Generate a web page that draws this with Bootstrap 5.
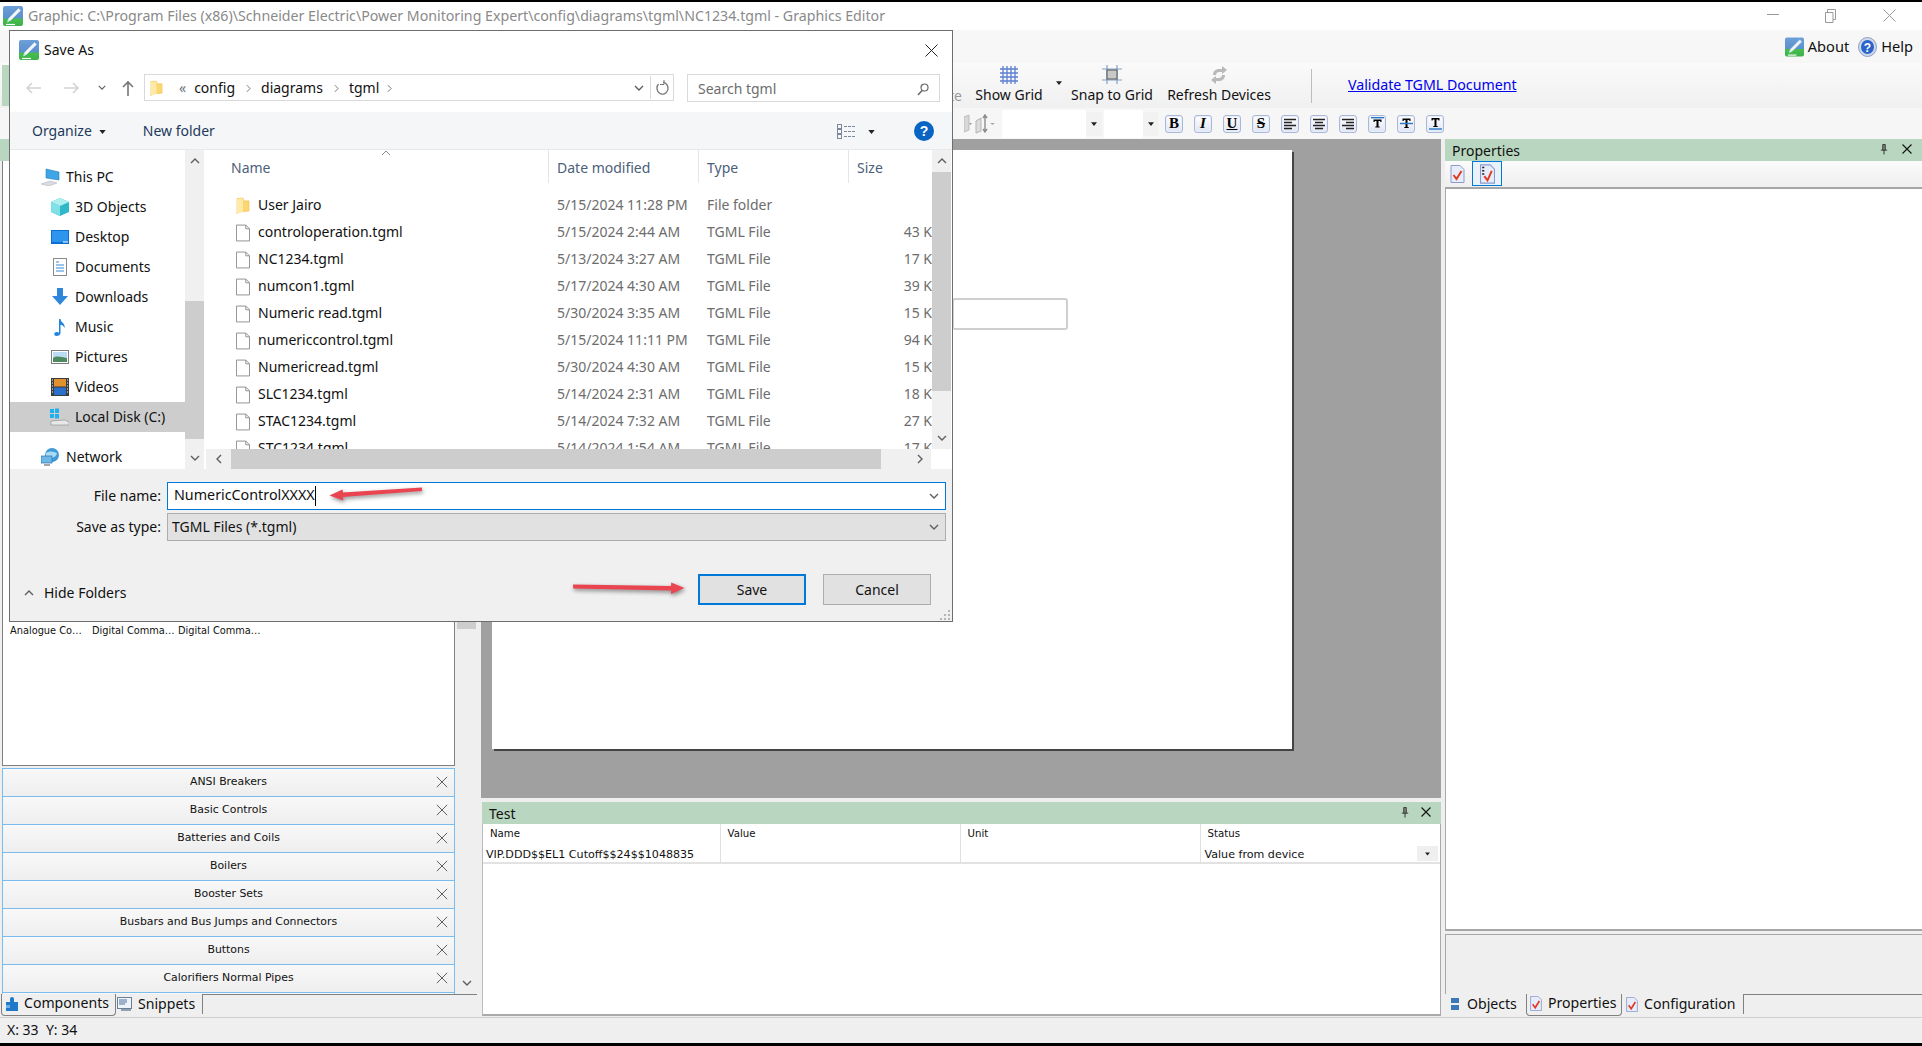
<!DOCTYPE html>
<html lang="en">
<head>
<meta charset="utf-8">
<title>Graphics Editor</title>
<link href="https://cdn.jsdelivr.net/npm/bootstrap@5.3.0/dist/css/bootstrap.min.css" rel="stylesheet">
<style>
html,body{height:100%;overflow:hidden;background:#000;}
body{font-family:"Noto Sans","Open Sans",sans-serif;font-size:14px;color:#111;line-height:1.2;}
svg{display:block;flex:none;}
.app-win{margin-top:2px;height:1041px;width:1922px;background:#efefef;position:relative;}
.title-bar{height:28px;background:#fff;padding-left:3px;}
.title-text{font-size:14.2px;color:#8a8a8a;margin-left:5px;white-space:nowrap;}
.win-btn{width:58px;display:flex;justify-content:center;}
.menu-row{height:33px;background:#f7f7f7;padding-right:9px;font-size:14.6px;}
.gap-about{margin-right:9px;}
.ribbon-row{height:45px;background:linear-gradient(#fafafa,#f0f0f0);}
.green-stub{width:7px;height:41px;margin-left:2px;background:#b9d7c0;}
.rib-spacer{width:953px;height:45px;text-align:right;color:#999;padding-top:25px;}
.rib-btn{display:flex;flex-direction:column;align-items:center;height:45px;padding-top:3px;white-space:nowrap;}
.rib-btn span{margin-top:3px;}
.rib-grid{width:88px;margin-left:3px;}
.rib-snap{width:94px;padding-top:2px;}
.rib-refresh{width:120px;}
.rib-drop{width:12px;padding-top:18px;display:flex;justify-content:center;align-self:flex-start;}
.rib-sep{width:1px;height:34px;background:#bdbdbd;margin:0 36px 0 32px;}
.rib-link{color:#0000ee;text-decoration:underline;font-size:14.2px;margin-top:-1px;}
.format-row{height:31px;background:#f6f6f6;}
.fmt-icons{width:1002px;display:flex;justify-content:flex-end;padding-right:6px;}
.combo-white{height:28px;background:#fff;}
.cw-font{width:84px;}
.cw-size{width:39px;margin-left:2px;}
.combo-drop{height:24px;background:#f2f2f2;display:flex;align-items:center;justify-content:center;}
.cd-font{width:16px;}
.cd-size{width:15px;}
.fmt-group{display:flex;gap:11px;margin-left:7px;}
.fmt-btn{width:18px;height:18px;border:1px solid #a9b8da;border-radius:3px;background:linear-gradient(#fff,#dfe5f3);display:flex;align-items:center;justify-content:center;box-shadow:inset 0 0 0 1px #e9eef8;font-family:"Liberation Serif",serif;font-weight:700;font-size:15px;line-height:1;color:#000;}
.fmt-i{font-style:italic;}
.fmt-u{text-decoration:underline;}
.fmt-s{text-decoration:line-through;}
.fmt-t{font-size:13px;}
.main-row{height:878px;}
.left-col{width:481px;background:#efefef;}
.center-col{width:960px;}
.right-col{width:481px;padding-left:4px;}
.dock-head{height:22px;background:#b9d7c0;padding:2px 10px 0 7px;display:flex;align-items:center;font-size:14px;}
.dock-tools{margin-left:auto;display:flex;align-items:center;gap:12px;margin-top:-4px;}
.dock-tools-wide{gap:14px;}
.left-body{height:833px;}
.left-stack{width:453px;margin-left:2px;}
.tile-pane{height:605px;background:#fff;border:1px solid #808080;border-top:0;padding-top:464px;}
.tile-labels{padding-left:7px;font-family:"DejaVu Sans",sans-serif;font-size:9.8px;display:flex;}
.tile-labels span{white-space:nowrap;}
.tl-a{width:82px;}
.tl-b{width:86px;}
.cat-list{height:226px;overflow:hidden;margin-top:2px;border-radius:0;}
.cat-item{display:grid;flex:none;grid-template-columns:24px 1fr 24px;align-items:center;height:28px;padding:0 0 2px;background:linear-gradient(#f8f8f8,#eeeeee);border:1px solid #7cbcec;border-bottom:0;border-radius:0!important;font-family:"DejaVu Sans",sans-serif;font-size:10.9px;color:#111;text-align:center;}
.cat-item+.cat-item{border-top-width:1px;margin-top:0;}
.cat-item svg{justify-self:center;}
.vscroll-l{width:19px;margin-left:2px;background:#efefef;position:relative;}
.vthumb-l{height:468px;background:#cdcdcd;}
.vchev-l{margin-top:auto;padding-bottom:8px;display:flex;justify-content:center;}
.tab-strip{height:23px;font-size:14.1px;}
.tab-on{border:1px solid #808080;border-top:0;border-radius:0 0 4px 4px;height:22px;}
.tab-item{display:flex;align-items:center;gap:6px;white-space:nowrap;padding-bottom:3px;}
.tab-sep{width:1px;height:20px;background:#808080;}
.tab-line{flex:1;border-top:1px solid #808080;align-self:flex-start;}
.tab-comp{margin-left:1px;padding-left:4px;width:115px;}
.tab-snip{padding-left:1px;width:86px;}
.tab-obj{padding-left:6px;width:81px;gap:8px;}
.tab-prop{padding-left:3px;width:96px;}
.tab-conf{padding-left:4px;width:121px;}
.canvas-wrap{height:659px;background:#a0a0a0;padding:11px 0 0 11px;}
.page-sheet{width:800px;height:599px;background:#fff;box-shadow:2px 2px 0 #444;position:relative;}
.sheet-input{position:absolute;left:460px;top:148px;width:116px;height:32px;border:2px solid #cfcfcf;border-radius:3px;}
.test-panel{margin-top:4px;margin-left:1px;height:215px;}
.test-body{height:192px;background:#fff;border-left:1px solid #bbb;border-right:1px solid #aaa;border-bottom:2px solid #aaa;}
.tbl-test{table-layout:fixed;width:100%;margin:0;font-family:"DejaVu Sans",sans-serif;font-size:10.2px;}
.tc-first{width:237px;}
.tbl-test>tbody>tr>td{padding:0 0 0 7px;border:0;border-left:1px solid #e0e0e0;height:21px;vertical-align:middle;background:transparent;color:#111;position:relative;white-space:nowrap;}
.tbl-test>tbody>tr:last-child>td{height:18px;border-bottom:2px solid #e2e2e2;font-size:11.1px;padding-top:2px;}
.tbl-test>tbody>tr>td:first-child{border-left:0;}
.tbl-test>tbody>tr:last-child>td:first-child{padding-left:3px;}
.tbl-test>tbody>tr:last-child>td:last-child{padding-left:4px;}
.cell-drop{position:absolute;right:2px;top:1px;width:21px;height:15px;background:#efefef;display:flex;align-items:center;justify-content:center;}
.prop-tools{height:28px;background:linear-gradient(#fbfbfb,#efefef);border-bottom:2px solid #a6a6a6;padding-left:5px;display:flex;align-items:center;gap:7px;}
.prop-sel{width:30px;height:25px;border:1px solid #0078d7;background:#e9f1fb;display:flex;align-items:center;justify-content:center;}
.prop-body{height:743px;background:#fff;border-left:1px solid #aaa;border-bottom:2px solid #a6a6a6;}
.prop-low{height:60px;margin-top:3px;background:#efefef;border:1px solid #a6a6a6;border-right:0;border-bottom:0;}
.status-bar{height:26px;background:#efefef;border-top:1px solid #cfcfcf;padding-left:7px;font-size:14px;display:flex;align-items:center;}
.dlg{position:absolute;left:9px;top:28px;width:944px;height:592px;background:#fff;border:1px solid #6e6e6e;display:flex;flex-direction:column;font-family:"Noto Sans","Open Sans",sans-serif;font-size:14px;}
.dlg-title{height:38px;padding-left:9px;flex:none;}
.dlg-title-ic{margin-right:5px;}
.dlg-close{margin-left:auto;margin-right:14px;}
.dlg-nav{height:43px;flex:none;padding-top:5px;align-items:flex-start;}
.nbox{display:flex;justify-content:center;align-items:center;height:27px;}
.nb-back{width:46px;}
.nb-fwd{width:32px;}
.nb-down{width:28px;}
.nb-up{width:24px;}
.addr-box{width:530px;height:27px;margin-left:4px;border:1px solid #d9d9d9;padding:2px 0 0 5px;}
.addr-box span{white-space:nowrap;}
.addr-sep{margin:0 10px 0 11px;}
.addr-end{margin-left:auto;display:flex;align-items:center;height:100%;margin-top:-2px;}
.addr-div{width:1px;height:100%;background:#d9d9d9;margin:0 4px 0 6px;}
.addr-ref{margin-right:4px;}
.search-box{width:253px;height:28px;margin-left:13px;border:1px solid #d9d9d9;color:#6d6d6d;padding:3px 10px 0;}
.dlg-tools{height:38px;flex:none;background:#f5f6f7;border-bottom:1px solid #e8e8e8;padding:2px 0 0 22px;color:#1c3a5e;}
.org-tri{margin:0 37px 0 7px;}
.view-ic{margin-left:auto;}
.view-tri{margin:0 38px 0 13px;}
.help-ic{margin-right:17px;margin-top:-2px;}
.dlg-body{height:319px;flex:none;}
.nav-pane{width:175px;padding-top:12px;overflow:hidden;height:319px;}
.nav-it{height:30px;display:flex;align-items:center;gap:6px;padding-left:41px;white-space:nowrap;}
.nav-top{padding-left:31px;}
.nav-sel{background:#cdcdcd;padding-left:40px;}
.nav-net{margin-top:10px;}
.scroll-y{width:19px;background:#f0f0f0;position:relative;}
.nav-thumb{position:absolute;left:0;right:0;top:151px;height:138px;background:#cdcdcd;}
.chev-slot{height:22px;display:flex;align-items:center;justify-content:center;position:relative;}
.chev-end{position:absolute;left:0;right:0;bottom:0;}
.list-area{width:746px;margin-left:2px;}
.list-top{height:299px;}
.file-pane{width:726px;overflow:hidden;height:299px;}
.file-head{height:42px;display:flex;color:#4c607a;position:relative;}
.fh{height:33px;display:flex;align-items:center;padding:3px 0 0 8px;border-right:1px solid #e5e5e5;}
.fc-name{width:343px;}
.fc-date{width:150px;}
.fc-size{width:83px;}
.fh.fc-name{padding-left:25px;}
.fh.fc-size{border-right:0;}
.sort-mark{position:absolute;left:175px;top:0;}
.file-row{height:27px;display:flex;align-items:center;color:#6d6d6d;white-space:nowrap;}
.fr-name{display:flex;align-items:center;gap:8px;padding-left:30px;color:#111;}
.fr-date,.fr-type{padding-left:8px;}
.fr-size{text-align:right;}
.list-v{width:19px;background:#f0f0f0;height:299px;position:relative;}
.list-vthumb{position:absolute;left:0;right:0;top:22px;height:219px;background:#cdcdcd;}
.list-h{height:20px;}
.hs-track{width:725px;height:20px;background:#f0f0f0;display:flex;}
.hs-left{width:25px;display:flex;align-items:center;justify-content:center;}
.hs-thumb{width:650px;background:#cdcdcd;}
.hs-right{width:50px;display:flex;align-items:center;justify-content:center;padding-left:28px;}
.dlg-foot{flex:1;background:#f0f0f0;padding-top:13px;position:relative;}
.ff-row{display:flex;align-items:center;height:28px;}
.ff-row-2{margin-top:3px;}
.ff-label{width:151px;text-align:right;margin-right:6px;}
.ff-in{width:779px;height:28px;display:flex;align-items:center;justify-content:space-between;padding:0 6px;}
.ff-active{background:#fff;border:1px solid #0078d7;font-size:14.3px;}
.ff-type{background:#e1e1e1;border:1px solid #adadad;padding-left:4px;}
.caret-bar{display:inline-block;width:1px;height:20px;background:#000;vertical-align:middle;}
.foot-btns{margin-top:33px;height:31px;padding-left:14px;padding-right:21px;}
.hide-f{margin-top:11px;gap:10px;}
.dlg-btn{width:108px;height:31px;border-radius:0;background:#e1e1e1;border:1px solid #adadad;color:#111;font-size:14px;padding:0;}
.dlg-btn-main{border:2px solid #0078d7;margin-right:17px;}
.foot-push{margin-left:auto;}
.grip{position:absolute;right:2px;bottom:1px;}
.anno{position:absolute;left:0;top:0;pointer-events:none;filter:drop-shadow(1px 2px 2px rgba(0,0,0,.45));}
.defs-host{position:absolute;}
</style>
</head>
<body>
<svg width="0" height="0" class="defs-host">
  <defs>
    <linearGradient id="gApp" x1="0" y1="0" x2="0" y2="1"><stop offset="0" stop-color="#6d9fd8"/><stop offset=".62" stop-color="#5b8fcc"/><stop offset=".63" stop-color="#45bf4e"/><stop offset="1" stop-color="#3fb04a"/></linearGradient>
    <symbol id="i-app" viewBox="0 0 20 20"><rect width="20" height="20" rx="2" fill="url(#gApp)"/><path d="M15.500 2.500l2 2L8 14l-3.500 2 1.400-3.800z" fill="#f4f8fb" stroke="#cfe0ef" stroke-width=".7"/><path d="M3 18.500h9" stroke="#fff" stroke-width="1.200"/></symbol>
    <symbol id="i-chevd" viewBox="0 0 10 6"><path d="M1 1l4 4 4-4" fill="none" stroke="#5f5f5f" stroke-width="1.400"/></symbol>
    <symbol id="i-chevu" viewBox="0 0 10 6"><path d="M1 5l4-4 4 4" fill="none" stroke="#5f5f5f" stroke-width="1.400"/></symbol>
    <symbol id="i-chevr" viewBox="0 0 6 10"><path d="M1 1l4 4-4 4" fill="none" stroke="#6f6f6f" stroke-width="1.100"/></symbol>
    <symbol id="i-chevl" viewBox="0 0 6 10"><path d="M5 1L1 5l4 4" fill="none" stroke="#5f5f5f" stroke-width="1.400"/></symbol>
    <symbol id="i-chevr2" viewBox="0 0 6 10"><path d="M1 1l4 4-4 4" fill="none" stroke="#5f5f5f" stroke-width="1.400"/></symbol>
    <symbol id="i-folder" viewBox="0 0 14 18"><path d="M1 1.500l6-.5 1 3 5-.2V14l-11 1-1 2z" fill="#fbd671" stroke="#f0c14f" stroke-width=".6"/><path d="M1 16.500V2l6-.7V15z" fill="#ffe9a6"/></symbol>
    <symbol id="i-file" viewBox="0 0 15 18"><path d="M.5.500h10l4 4v13H.5z" fill="#fff" stroke="#8c8c8c"/><path d="M10.500.5v4h4" fill="none" stroke="#8c8c8c"/></symbol>
    <symbol id="i-tri" viewBox="0 0 8 5"><path d="M0 0h8L4 5z" fill="#222"/></symbol>
    <symbol id="i-x" viewBox="0 0 14 14"><path d="M1 1l12 12M13 1L1 13" stroke="#555" stroke-width="1.100" fill="none"/></symbol>
    <symbol id="i-pin" viewBox="0 0 10 14"><path d="M3 1h4v7h2v1H1V8h2zM4.500 9h1v5h-1z" fill="#111"/><path d="M5 2v6" stroke="#fff"/></symbol>
    <symbol id="i-check" viewBox="0 0 14 18"><path d="M.5.500h9l4 4v13H.5z" fill="#e6ecf9" stroke="#8c9ad0"/><path d="M3 10l3 4 5-8" fill="none" stroke="#e23a1f" stroke-width="2"/></symbol>
  </defs>
</svg>

<div class="app-win d-flex flex-column">
  <header class="title-bar d-flex align-items-center">
    <svg width="20" height="20"><use href="#i-app"/></svg>
    <span class="title-text">Graphic: C:\Program Files (x86)\Schneider Electric\Power Monitoring Expert\config\diagrams\tgml\NC1234.tgml - Graphics Editor</span>
    <div class="ms-auto d-flex pe-1">
      <div class="win-btn"><svg width="12" height="10"><path d="M0 5.500h12" stroke="#999"/></svg></div>
      <div class="win-btn"><svg width="12" height="14"><path d="M2.500 3.500V.5h8v10H8M.5 3.500h7.500v10H.5z" fill="none" stroke="#999"/></svg></div>
      <div class="win-btn"><svg width="13" height="13"><path d="M.5.500l12 12M12.500.5l-12 12" stroke="#999"/></svg></div>
    </div>
  </header>

  <div class="menu-row d-flex align-items-center justify-content-end">
    <svg width="19" height="20" class="me-1"><use href="#i-app"/></svg>
    <span class="gap-about">About</span>
    <svg width="19" height="20" class="me-1" viewBox="0 0 19 20"><ellipse cx="9.500" cy="10" rx="9" ry="9.500" fill="#cfd8ec" stroke="#8ea0c4"/><ellipse cx="9.500" cy="10" rx="6.500" ry="7" fill="#2a64c8"/><text x="9.500" y="14.500" text-anchor="middle" fill="#fff" font-size="12" font-weight="700" font-family="Liberation Sans">?</text></svg>
    <span>Help</span>
  </div>

  <div class="ribbon-row d-flex align-items-center">
    <div class="green-stub"></div>
    <div class="rib-spacer">Rotate</div>
    <div class="rib-btn rib-grid">
      <svg width="18" height="18" viewBox="0 0 18 18"><g stroke="#5b7fd0" stroke-width="1.300" fill="none"><path d="M3 0v18M7 0v18M11 0v18M15 0v18M0 3h18M0 7h18M0 11h18M0 15h18"/></g></svg>
      <span>Show Grid</span>
    </div>
    <div class="rib-drop"><svg width="6" height="4"><use href="#i-tri"/></svg></div>
    <div class="rib-btn rib-snap">
      <svg width="20" height="19" viewBox="0 0 20 19"><path d="M5 0v19M15 0v19M0 4h20M0 15h20" stroke="#7fa2c9" stroke-width="1.200"/><rect x="5" y="5" width="10" height="9" fill="#c9c9c9" stroke="#555"/></svg>
      <span>Snap to Grid</span>
    </div>
    <div class="rib-btn rib-refresh">
      <svg width="16" height="18" viewBox="0 0 16 18"><path d="M2 9c0-4 3-6 6-6h3V0l5 4-5 4V6H8C6 6 5 7.500 5 9zM14 9c0 4-3 6-6 6H5v3l-5-4 5-4v2h3c2 0 3-1.500 3-3z" fill="#b9b9b9"/></svg>
      <span>Refresh Devices</span>
    </div>
    <div class="rib-sep"></div>
    <a href="#" class="rib-link">Validate TGML Document</a>
  </div>

  <div class="format-row d-flex align-items-center">
    <div class="fmt-icons">
      <svg width="32" height="20" viewBox="0 0 32 20"><path d="M0 3l5-2v15l-5 2z" fill="#d8d8d8" stroke="#bbb"/><path d="M5 9l3 0-1.500 2z" fill="#999"/><path d="M12 7l5-3v13l-5 2z" fill="#dcdcdc" stroke="#b5b5b5"/><path d="M21 1v17M19 4l2-3 2 3M19 15l2 3 2-3" stroke="#8d8d8d" fill="none" stroke-width="1.400"/><path d="M26 9h5l-2.500 2z" fill="#aaa"/></svg>
    </div>
    <div class="combo-white cw-font"></div>
    <div class="combo-drop cd-font"><svg width="6" height="4"><use href="#i-tri"/></svg></div>
    <div class="combo-white cw-size"></div>
    <div class="combo-drop cd-size"><svg width="6" height="4"><use href="#i-tri"/></svg></div>
    <div class="fmt-group">
      <div class="fmt-btn">B</div>
      <div class="fmt-btn fmt-i">I</div>
      <div class="fmt-btn fmt-u">U</div>
      <div class="fmt-btn fmt-s">S</div>
      <div class="fmt-btn"><svg width="12" height="12" viewBox="0 0 12 12"><path d="M0 1.500h12M0 4.500h8M0 7.500h12M0 10.500h8" stroke="#222" stroke-width="1.500"/></svg></div>
      <div class="fmt-btn"><svg width="12" height="12" viewBox="0 0 12 12"><path d="M0 1.500h12M2 4.500h8M0 7.500h12M2 10.500h8" stroke="#222" stroke-width="1.500"/></svg></div>
      <div class="fmt-btn"><svg width="12" height="12" viewBox="0 0 12 12"><path d="M0 1.500h12M4 4.500h8M0 7.500h12M4 10.500h8" stroke="#222" stroke-width="1.500"/></svg></div>
      <div class="fmt-btn fmt-t"><svg width="13" height="13" viewBox="0 0 13 13"><path d="M0 .7h13" stroke="#2c78c8" stroke-width="1.400"/><path d="M2.500 2.500h8v2.500h-1l-.5-1H7.500v5.500h1.200v1H4.300v-1h1.200V4H4l-.5 1h-1z" fill="#000"/></svg></div>
      <div class="fmt-btn fmt-t"><svg width="13" height="13" viewBox="0 0 13 13"><path d="M2.500 1.500h8v2.500h-1l-.5-1H7.500v7h1.200v1H4.300v-1h1.200V3H4l-.5 1h-1z" fill="#000"/><path d="M0 6.500h13" stroke="#2c78c8" stroke-width="1.400"/></svg></div>
      <div class="fmt-btn fmt-t"><svg width="13" height="13" viewBox="0 0 13 13"><path d="M2.500 1h8v2.500h-1l-.5-1H7.500V9h1.200v1H4.300V9h1.200V2.500H4l-.5 1h-1z" fill="#000"/><path d="M0 12h13" stroke="#2c78c8" stroke-width="1.400"/></svg></div>
    </div>
  </div>

  <main class="main-row d-flex">
    <section class="left-col d-flex flex-column">
      <div class="dock-head"></div>
      <div class="left-body d-flex">
        <div class="left-stack">
          <div class="tile-pane">
            <div class="tile-labels">
              <span class="tl-a">Analogue Co…</span>
              <span class="tl-b">Digital Comma…</span>
              <span>Digital Comma…</span>
            </div>
          </div>
          <div class="list-group cat-list">
            <div class="list-group-item cat-item"><span></span><span>ANSI Breakers</span><svg width="12" height="12"><use href="#i-x"/></svg></div>
            <div class="list-group-item cat-item"><span></span><span>Basic Controls</span><svg width="12" height="12"><use href="#i-x"/></svg></div>
            <div class="list-group-item cat-item"><span></span><span>Batteries and Coils</span><svg width="12" height="12"><use href="#i-x"/></svg></div>
            <div class="list-group-item cat-item"><span></span><span>Boilers</span><svg width="12" height="12"><use href="#i-x"/></svg></div>
            <div class="list-group-item cat-item"><span></span><span>Booster Sets</span><svg width="12" height="12"><use href="#i-x"/></svg></div>
            <div class="list-group-item cat-item"><span></span><span>Busbars and Bus Jumps and Connectors</span><svg width="12" height="12"><use href="#i-x"/></svg></div>
            <div class="list-group-item cat-item"><span></span><span>Buttons</span><svg width="12" height="12"><use href="#i-x"/></svg></div>
            <div class="list-group-item cat-item"><span></span><span>Calorifiers Normal Pipes</span><svg width="12" height="12"><use href="#i-x"/></svg></div>
            <div class="list-group-item cat-item"></div>
          </div>
        </div>
        <div class="vscroll-l d-flex flex-column">
          <div class="vthumb-l"></div>
          <div class="vchev-l"><svg width="10" height="6"><use href="#i-chevd"/></svg></div>
        </div>
      </div>
      <div class="tab-strip d-flex">
        <div class="tab-item tab-on tab-comp">
          <svg width="12" height="15" viewBox="0 0 12 15"><path d="M0 6h4V3a2 2 0 0 1 4 0v3h4v9H0z" fill="#1f78c8"/><path d="M0 9h4v3H0z" fill="#6eb2e8"/></svg>
          <span>Components</span>
        </div>
        <div class="tab-item tab-snip">
          <svg width="15" height="14" viewBox="0 0 15 14"><rect x=".5" y=".5" width="14" height="11" fill="#eef3fa" stroke="#6b7f99"/><path d="M2 3h8M2 5h8M2 7h6" stroke="#4d6f9c"/><path d="M4 13h10" stroke="#6b7f99" stroke-width="1.400"/></svg>
          <span>Snippets</span>
        </div>
        <div class="tab-sep"></div>
        <div class="tab-line me-1"></div>
      </div>
    </section>

    <section class="center-col d-flex flex-column">
      <div class="canvas-wrap">
        <div class="page-sheet"><div class="sheet-input"></div></div>
      </div>
      <div class="test-panel d-flex flex-column">
        <div class="dock-head">Test
          <div class="dock-tools"><svg width="8" height="12"><use href="#i-pin"/></svg><svg width="10" height="10"><path d="M.5.500l9 9M9.500.5l-9 9" stroke="#111" stroke-width="1.100"/></svg></div>
        </div>
        <div class="test-body">
          <table class="table tbl-test">
            <colgroup><col class="tc-first"><col><col><col></colgroup>
            <tbody>
              <tr><td>Name</td><td>Value</td><td>Unit</td><td>Status</td></tr>
              <tr><td>VIP.DDD$$EL1 Cutoff$$24$$1048835</td><td></td><td></td><td>Value from device<div class="cell-drop"><svg width="5" height="4"><use href="#i-tri"/></svg></div></td></tr>
            </tbody>
          </table>
        </div>
      </div>
    </section>

    <section class="right-col d-flex flex-column">
      <div class="dock-head">Properties
        <div class="dock-tools dock-tools-wide"><svg width="8" height="12"><use href="#i-pin"/></svg><svg width="10" height="10"><path d="M.5.500l9 9M9.500.5l-9 9" stroke="#111" stroke-width="1.100"/></svg></div>
      </div>
      <div class="prop-tools">
        <svg width="15" height="18"><use href="#i-check"/></svg>
        <div class="prop-sel"><svg width="15" height="20" viewBox="0 0 14 18"><path d="M.5.500h9l4 4v13H.5z" fill="#e6ecf9" stroke="#8c9ad0"/><path d="M2 3h2M2 6h2M2 9h2" stroke="#222" stroke-width="1.400"/><path d="M4 11l3 4 4-9" fill="none" stroke="#e23a1f" stroke-width="1.800"/></svg></div>
      </div>
      <div class="prop-body"></div>
      <div class="prop-low"></div>
      <div class="tab-strip d-flex">
        <div class="tab-item tab-obj">
          <svg width="8" height="12" viewBox="0 0 8 12"><rect width="8" height="5" fill="#3a78b8"/><rect y="7" width="8" height="5" fill="#3a78b8"/></svg>
          <span>Objects</span>
        </div>
        <div class="tab-item tab-on tab-prop">
          <svg width="12" height="15"><use href="#i-check"/></svg>
          <span>Properties</span>
        </div>
        <div class="tab-item tab-conf">
          <svg width="12" height="15"><use href="#i-check"/></svg>
          <span>Configuration</span>
        </div>
        <div class="tab-sep"></div>
        <div class="tab-line"></div>
      </div>
    </section>
  </main>

  <footer class="status-bar">X: 33&nbsp;&nbsp;Y: 34</footer>

  <div class="dlg">
    <div class="dlg-title d-flex align-items-center">
      <svg width="20" height="20" class="dlg-title-ic"><use href="#i-app"/></svg>
      <span>Save As</span>
      <svg width="13" height="13" class="dlg-close"><path d="M.5.500l12 12M12.500.5l-12 12" stroke="#222"/></svg>
    </div>

    <div class="dlg-nav d-flex">
      <div class="nbox nb-back"><svg width="16" height="14" viewBox="0 0 16 14"><path d="M16 7H2M7 2L2 7l5 5" fill="none" stroke="#d2d2d2" stroke-width="1.500"/></svg></div>
      <div class="nbox nb-fwd"><svg width="16" height="14" viewBox="0 0 16 14"><path d="M0 7h14M9 2l5 5-5 5" fill="none" stroke="#d2d2d2" stroke-width="1.500"/></svg></div>
      <div class="nbox nb-down"><svg width="8" height="5"><use href="#i-chevd"/></svg></div>
      <div class="nbox nb-up"><svg width="14" height="16" viewBox="0 0 14 16"><path d="M7 16V2M2 7l5-5 5 5" fill="none" stroke="#777" stroke-width="1.600"/></svg></div>
      <div class="addr-box d-flex align-items-center">
        <svg width="13" height="17"><use href="#i-folder"/></svg>
        <span class="ms-3 text-secondary">«</span>
        <span class="ms-2">config</span>
        <svg width="5" height="9" class="addr-sep"><use href="#i-chevr"/></svg>
        <span>diagrams</span>
        <svg width="5" height="9" class="addr-sep"><use href="#i-chevr"/></svg>
        <span>tgml</span>
        <svg width="5" height="9" class="ms-2"><use href="#i-chevr"/></svg>
        <div class="addr-end">
          <svg width="10" height="6"><use href="#i-chevd"/></svg>
          <div class="addr-div"></div>
          <svg width="14" height="16" viewBox="0 0 14 16" class="addr-ref"><path d="M8 2.200A5.500 6 0 1 1 3.500 4" fill="none" stroke="#777" stroke-width="1.300"/><path d="M9 0v4.500H5" fill="none" stroke="#777" stroke-width="1"/></svg>
        </div>
      </div>
      <div class="search-box d-flex align-items-center justify-content-between">
        <span>Search tgml</span>
        <svg width="12" height="13" viewBox="0 0 12 13"><circle cx="7.500" cy="4.500" r="3.500" fill="none" stroke="#666" stroke-width="1.200"/><path d="M5 7.500L1 12" stroke="#666" stroke-width="1.500"/></svg>
      </div>
    </div>

    <div class="dlg-tools d-flex align-items-center">
      <span>Organize</span>
      <svg width="7" height="4" class="org-tri"><use href="#i-tri"/></svg>
      <span>New folder</span>
      <svg width="18" height="16" viewBox="0 0 18 16" class="view-ic"><g fill="none" stroke="#7a8a9a"><rect x=".5" y=".5" width="4" height="4"/><rect x=".5" y="5.500" width="4" height="4"/><rect x=".5" y="10.500" width="4" height="4"/></g><path d="M7 2.500h11M7 7.500h11M7 12.500h11" stroke="#7a8a9a" stroke-dasharray="3 1"/></svg>
      <svg width="7" height="4" class="view-tri"><use href="#i-tri"/></svg>
      <svg width="22" height="22" viewBox="0 0 22 22" class="help-ic"><circle cx="11" cy="11" r="10" fill="#0a64c4"/><text x="11" y="16" text-anchor="middle" fill="#fff" font-size="14" font-weight="700" font-family="Liberation Sans">?</text></svg>
    </div>

    <div class="dlg-body d-flex">
      <nav class="nav-pane">
        <div class="nav-it nav-top"><svg width="19" height="18" viewBox="0 0 19 18"><path d="M5 1l13 3v8l-13-2z" fill="#3ea6e6" stroke="#2a7cb8" stroke-width=".6"/><path d="M0 16l9-3 7 2-8 3z" fill="#d8dde2" stroke="#aab" stroke-width=".5"/></svg><span>This PC</span></div>
        <div class="nav-it"><svg width="18" height="18" viewBox="0 0 18 18"><path d="M9 0l9 4v10l-9 4-9-4V4z" fill="#2fb8c8"/><path d="M9 0l9 4-9 4-9-4z" fill="#aef0f0"/><path d="M0 4l9 4v10l-9-4z" fill="#7fe0e6"/></svg><span>3D Objects</span></div>
        <div class="nav-it"><svg width="18" height="14" viewBox="0 0 18 14"><rect width="18" height="14" fill="#0a6fd0"/><rect x="1" y="1" width="16" height="11" fill="#2e95ee"/><path d="M12 12h5" stroke="#fff"/></svg><span>Desktop</span></div>
        <div class="nav-it"><svg width="18" height="18" viewBox="0 0 18 18"><rect x="2.500" y=".5" width="13" height="17" fill="#fff" stroke="#8a8a8a"/><path d="M5 4h3M5 7h8M5 10h8M5 13h8" stroke="#3a8ad8"/></svg><span>Documents</span></div>
        <div class="nav-it"><svg width="18" height="18" viewBox="0 0 18 18"><path d="M6 0h6v8h5l-8 9-8-9h5z" fill="#2f87dc"/></svg><span>Downloads</span></div>
        <div class="nav-it"><svg width="18" height="18" viewBox="0 0 18 18"><path d="M8 1l1.500 0c.5 4 5 4 4 9-1-2.500-2.500-3-4-3v8c0 2-2 3-4 3-3 0-3-4 0-4 1 0 2 .3 2.500.8z" fill="#1f86e0"/></svg><span>Music</span></div>
        <div class="nav-it"><svg width="18" height="14" viewBox="0 0 18 14"><rect x=".5" y=".5" width="17" height="13" fill="#fff" stroke="#7d7d7d"/><rect x="2" y="2" width="14" height="10" fill="#bcdcf4"/><path d="M2 8c4-3 8-1 14 0v4H2z" fill="#4f8a5f"/></svg><span>Pictures</span></div>
        <div class="nav-it"><svg width="18" height="18" viewBox="0 0 18 18"><rect width="18" height="18" fill="#3b3b3b"/><rect x="3" y="1" width="12" height="7.500" fill="#e0902f"/><rect x="3" y="9.500" width="12" height="7.500" fill="#2a6fc8"/><path d="M1 2h1M1 5h1M1 8h1M1 11h1M1 14h1M16 2h1M16 5h1M16 8h1M16 11h1M16 14h1" stroke="#fff"/></svg><span>Videos</span></div>
        <div class="nav-it nav-sel"><svg width="19" height="18" viewBox="0 0 19 18"><path d="M0 1h4v4H0zM5 .5h4v4.500H5zM0 6h4v4H0zM5 6h4v4.500H5z" fill="#1fb0ee"/><path d="M1 13l14-1 4 2v3H1z" fill="#e8e8e8" stroke="#8a8a8a" stroke-width=".6"/></svg><span>Local Disk (C:)</span></div>
        <div class="nav-it nav-top nav-net"><svg width="19" height="18" viewBox="0 0 19 18"><circle cx="11" cy="7" r="7" fill="#3f9bd8"/><path d="M5 5c3-2 7-2 11 0-1 5-7 7-11 3z" fill="#a9dcf4"/><rect x="0" y="8" width="11" height="7" fill="#6eb8e8" stroke="#2b6ea8" stroke-width=".7"/><path d="M3 17h6" stroke="#888" stroke-width="1.500"/></svg><span>Network</span></div>
      </nav>
      <div class="scroll-y">
        <div class="chev-slot"><svg width="10" height="6"><use href="#i-chevu"/></svg></div>
        <div class="nav-thumb"></div>
        <div class="chev-slot chev-end"><svg width="10" height="6"><use href="#i-chevd"/></svg></div>
      </div>
      <div class="list-area">
        <div class="list-top d-flex">
          <div class="file-pane">
            <div class="file-head">
              <div class="fh fc-name">Name</div>
              <div class="fh fc-date">Date modified</div>
              <div class="fh fc-date">Type</div>
              <div class="fh fc-size">Size</div>
              <svg class="sort-mark" width="10" height="6"><path d="M1 5l4-4 4 4" fill="none" stroke="#8a8a8a"/></svg>
            </div>
            <div class="file-row"><div class="fr-name fc-name"><svg width="14" height="18"><use href="#i-folder"/></svg><span>User Jairo</span></div><div class="fr-date fc-date">5/15/2024 11:28 PM</div><div class="fr-type fc-date">File folder</div></div>
            <div class="file-row"><div class="fr-name fc-name"><svg width="14" height="18"><use href="#i-file"/></svg><span>controloperation.tgml</span></div><div class="fr-date fc-date">5/15/2024 2:44 AM</div><div class="fr-type fc-date">TGML File</div><div class="fr-size fc-size">43 K</div></div>
            <div class="file-row"><div class="fr-name fc-name"><svg width="14" height="18"><use href="#i-file"/></svg><span>NC1234.tgml</span></div><div class="fr-date fc-date">5/13/2024 3:27 AM</div><div class="fr-type fc-date">TGML File</div><div class="fr-size fc-size">17 K</div></div>
            <div class="file-row"><div class="fr-name fc-name"><svg width="14" height="18"><use href="#i-file"/></svg><span>numcon1.tgml</span></div><div class="fr-date fc-date">5/17/2024 4:30 AM</div><div class="fr-type fc-date">TGML File</div><div class="fr-size fc-size">39 K</div></div>
            <div class="file-row"><div class="fr-name fc-name"><svg width="14" height="18"><use href="#i-file"/></svg><span>Numeric read.tgml</span></div><div class="fr-date fc-date">5/30/2024 3:35 AM</div><div class="fr-type fc-date">TGML File</div><div class="fr-size fc-size">15 K</div></div>
            <div class="file-row"><div class="fr-name fc-name"><svg width="14" height="18"><use href="#i-file"/></svg><span>numericcontrol.tgml</span></div><div class="fr-date fc-date">5/15/2024 11:11 PM</div><div class="fr-type fc-date">TGML File</div><div class="fr-size fc-size">94 K</div></div>
            <div class="file-row"><div class="fr-name fc-name"><svg width="14" height="18"><use href="#i-file"/></svg><span>Numericread.tgml</span></div><div class="fr-date fc-date">5/30/2024 4:30 AM</div><div class="fr-type fc-date">TGML File</div><div class="fr-size fc-size">15 K</div></div>
            <div class="file-row"><div class="fr-name fc-name"><svg width="14" height="18"><use href="#i-file"/></svg><span>SLC1234.tgml</span></div><div class="fr-date fc-date">5/14/2024 2:31 AM</div><div class="fr-type fc-date">TGML File</div><div class="fr-size fc-size">18 K</div></div>
            <div class="file-row"><div class="fr-name fc-name"><svg width="14" height="18"><use href="#i-file"/></svg><span>STAC1234.tgml</span></div><div class="fr-date fc-date">5/14/2024 7:32 AM</div><div class="fr-type fc-date">TGML File</div><div class="fr-size fc-size">27 K</div></div>
            <div class="file-row"><div class="fr-name fc-name"><svg width="14" height="18"><use href="#i-file"/></svg><span>STC1234.tgml</span></div><div class="fr-date fc-date">5/14/2024 1:54 AM</div><div class="fr-type fc-date">TGML File</div><div class="fr-size fc-size">17 K</div></div>
          </div>
          <div class="list-v">
            <div class="chev-slot"><svg width="10" height="6"><use href="#i-chevu"/></svg></div>
            <div class="list-vthumb"></div>
            <div class="chev-slot chev-end"><svg width="10" height="6"><use href="#i-chevd"/></svg></div>
          </div>
        </div>
        <div class="list-h d-flex">
          <div class="hs-track">
            <div class="hs-left"><svg width="6" height="10"><use href="#i-chevl"/></svg></div>
            <div class="hs-thumb"></div>
            <div class="hs-right"><svg width="6" height="10"><use href="#i-chevr2"/></svg></div>
          </div>
        </div>
      </div>
    </div>

    <div class="dlg-foot">
      <div class="ff-row">
        <div class="ff-label">File name:</div>
        <div class="ff-in ff-active"><span>NumericControlXXXX<span class="caret-bar"></span></span><svg width="10" height="6"><use href="#i-chevd"/></svg></div>
      </div>
      <div class="ff-row ff-row-2">
        <div class="ff-label">Save as type:</div>
        <div class="ff-in ff-type"><span>TGML Files (*.tgml)</span><svg width="10" height="6"><use href="#i-chevd"/></svg></div>
      </div>
      <div class="foot-btns d-flex align-items-start">
        <div class="hide-f d-flex align-items-center">
          <svg width="10" height="6"><use href="#i-chevu"/></svg>
          <span>Hide Folders</span>
        </div>
        <button type="button" class="btn dlg-btn dlg-btn-main foot-push">Save</button>
        <button type="button" class="btn dlg-btn">Cancel</button>
      </div>
      <svg class="grip" width="10" height="10" viewBox="0 0 10 10"><g fill="#b5b5b5"><rect x="8" y="0" width="2" height="2"/><rect x="4" y="4" width="2" height="2"/><rect x="8" y="4" width="2" height="2"/><rect x="0" y="8" width="2" height="2"/><rect x="4" y="8" width="2" height="2"/><rect x="8" y="8" width="2" height="2"/></g></svg>
    </div>

    <svg class="anno" width="944" height="592" viewBox="0 0 944 592">
      <path d="M412 456.500L333 461.500l-.5-3-13 6 13.800 5 -.5-3.500L412 460z" fill="#ea4450"/>
      <path d="M563 553.500l98 1.500 .2-3.500 13.300 5.500-13.500 6 .2-3.500-98-2z" fill="#ea4450"/>
    </svg>
  </div>
</div>
<script src="https://cdn.jsdelivr.net/npm/bootstrap@5.3.0/dist/js/bootstrap.bundle.min.js"></script>
</body>
</html>
